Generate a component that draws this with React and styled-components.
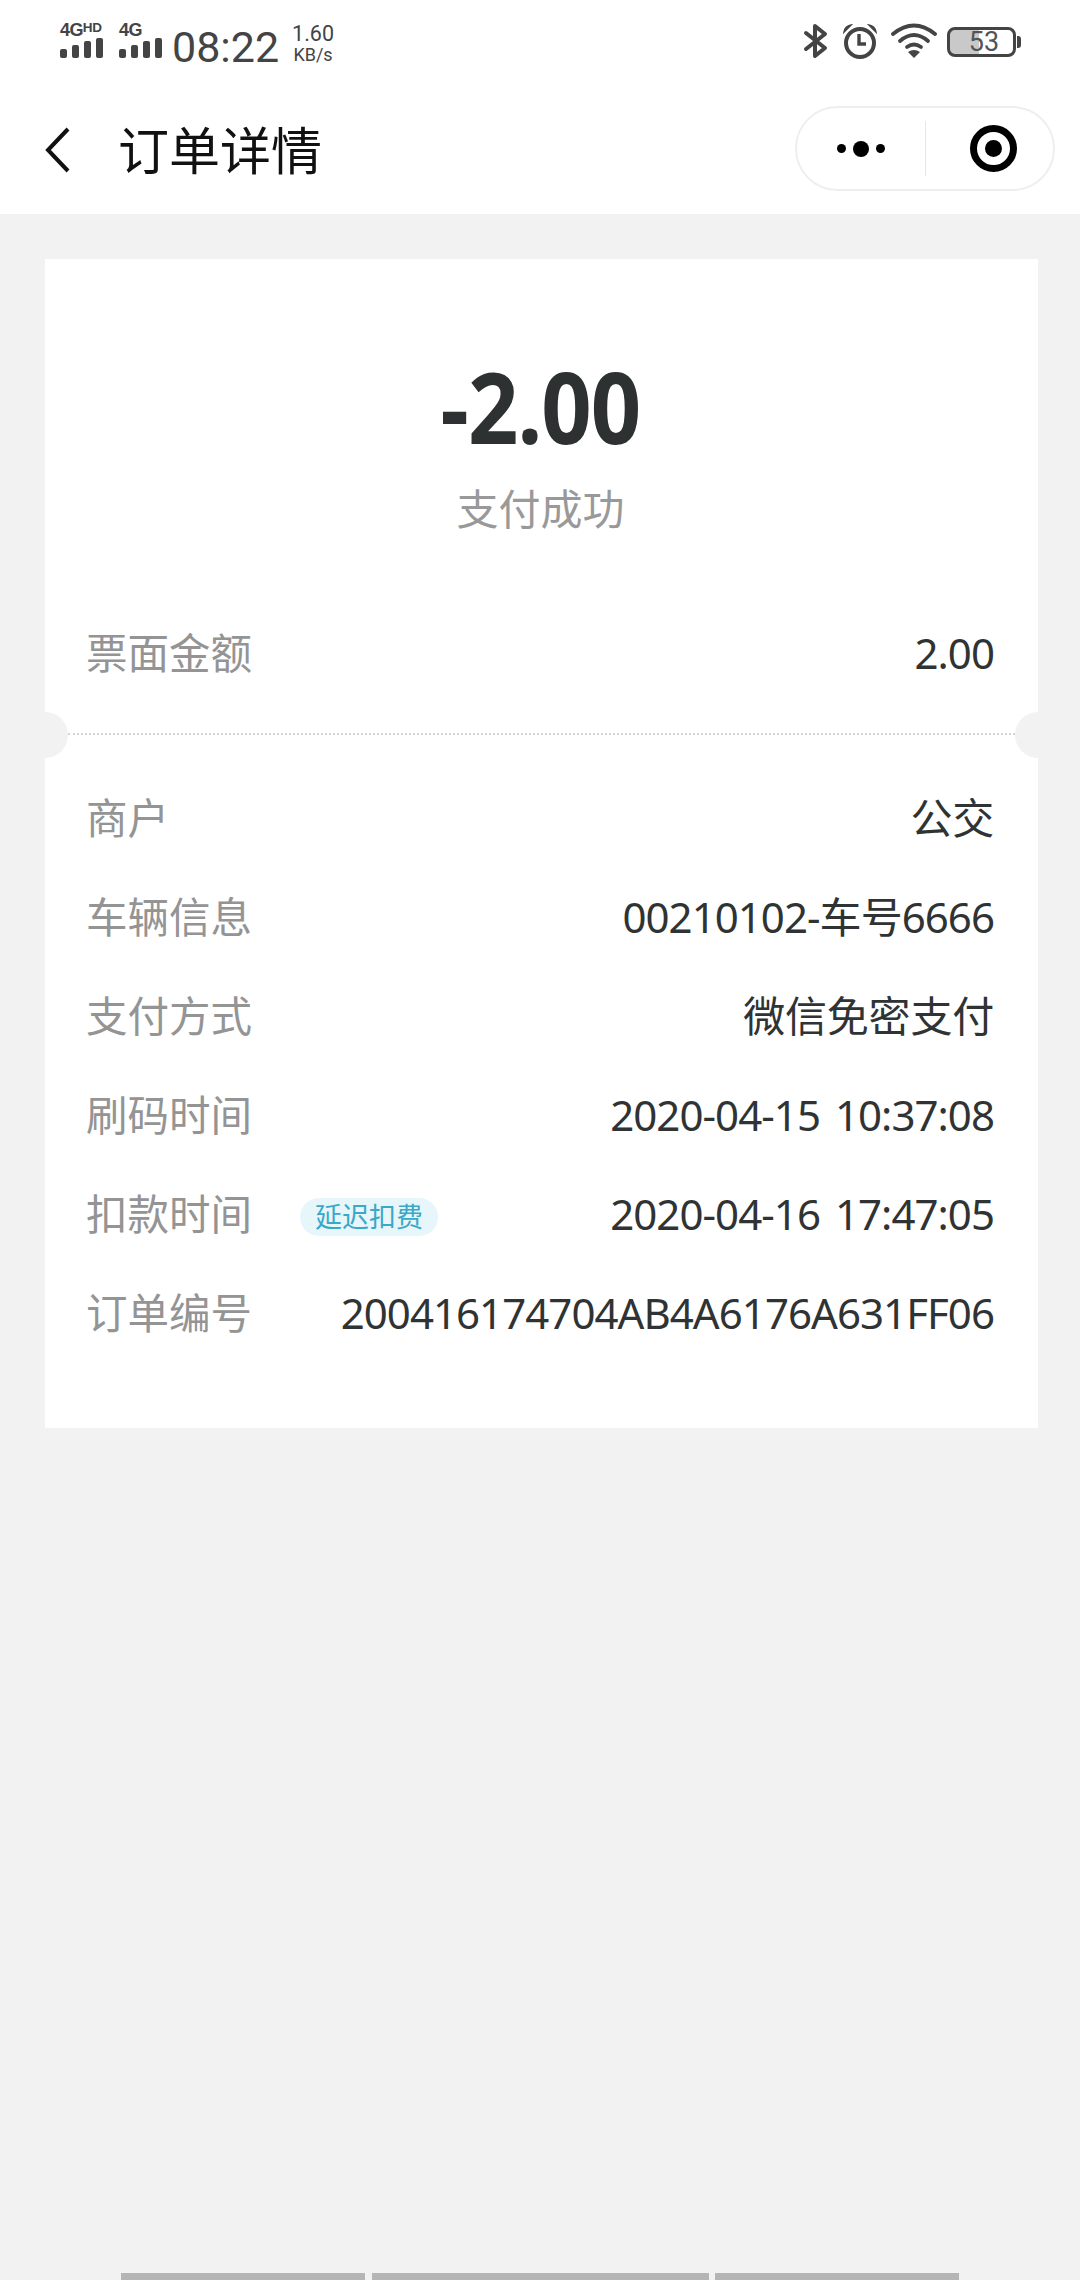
import React from "react";
import styled, { createGlobalStyle } from "styled-components";

const Global = createGlobalStyle`
  html, body { margin: 0; padding: 0; background: #f2f2f2; }
  * { box-sizing: border-box; }
`;
const CJK = `"Noto Sans", "Noto Sans CJK SC", sans-serif`;

const Page = styled.div`
  width: 1080px; height: 2280px; display: flex; flex-direction: column;
  background: #f2f2f2; font-family: ${CJK}; overflow: hidden;
`;
const Header = styled.header`
  height: 214px; background: #fff; display: flex; flex-direction: column; flex: none;
`;
const StatusBar = styled.div`
  height: 100px; padding: 23px 64px 0 60px; display: flex; justify-content: space-between; align-items: flex-start; color: #444;
`;
const StatusGroup = styled.div`
  display: flex; align-items: flex-start; gap: ${p => p.$gap}px;
`;
const Signal = styled.div`
  width: ${p => p.$w}px; display: flex; flex-direction: column; height: 36px; margin-right: ${p => p.$mr || 0}px;
`;
const SignalLabel = styled.div`
  font: 700 18px/14px "Liberation Sans", sans-serif; color: #444; letter-spacing: -0.6px; white-space: nowrap;
  sup { font-size: 13.5px; line-height: 0; vertical-align: 4px; letter-spacing: -0.2px; }
`;
const Bars = styled.div`
  display: flex; align-items: flex-end; justify-content: space-between; height: 20px; margin-top: 1px; width: 43px;
`;
const Bar = styled.span`
  width: 6.5px; height: ${p => p.$h}px; border-radius: 2px; background: #444; display: block;
`;
const Clock = styled.div`
  font: 400 43px/36px Roboto, sans-serif; color: #444; margin-top: 6px; margin-left: 10px;
`;
const Speed = styled.div`
  margin-left: 13px; margin-top: 2px; text-align: center; font-family: Roboto, sans-serif; color: #444;
  b { display: block; font-weight: 400; font-size: 21.5px; line-height: 18px; }
  i { display: block; font-style: normal; font-size: 18px; line-height: 17px; margin-top: 3px; }
`;
const Battery = styled.div`
  position: relative; width: 69px; height: 30px; border: 3px solid #444; border-radius: 8px; margin-top: 4px; margin-left: -3px;
  font: 400 27px/24px Roboto, sans-serif; color: #555; text-align: center; padding-left: 5px;
  background: linear-gradient(90deg, #c9c9c9 0 46%, transparent 46%);
  &::after { content: ""; position: absolute; right: -8px; top: 6px; width: 4px; height: 12px; background: #444; border-radius: 0 3px 3px 0; }
`;
const NavBar = styled.div`
  flex: 1; position: relative; display: flex; align-items: flex-start; padding: 0 25px 0 45px;
`;
const Back = styled.svg`
  width: 26px; height: 46px; margin-top: 27px; flex: none;
`;
const Title = styled.h1`
  margin: 17px 0 0 47px; font: 400 51px/66px ${CJK}; color: #111; flex: 1;
`;
const Capsule = styled.div`
  width: 260px; height: 85px; margin-top: 6px; border: 2px solid #eee; border-radius: 43px; display: flex; align-items: center; flex: none;
`;
const DotsBox = styled.div`
  width: 129px; height: 55px; display: flex; align-items: center; justify-content: flex-end; padding-right: 40px; gap: 7px;
  border-right: 1px solid #e6e6e6;
`;
const Dot = styled.span`
  width: ${p => p.$s}px; height: ${p => p.$s}px; border-radius: 50%; background: #000; display: block;
`;
const Target = styled.div`
  width: 47px; height: 47px; margin-left: 44px; border: 7px solid #000; border-radius: 50%; display: flex; align-items: center; justify-content: center;
  &::after { content: ""; width: 17px; height: 17px; border-radius: 50%; background: #000; }
`;
const Card = styled.section`
  margin: 45px 42px 0 45px; padding: 87px 44px 66px 41px; background: #fff; position: relative;
`;
const Amount = styled.div`
  text-align: center; font: 700 98px/120px "Noto Sans", sans-serif; color: #2e3131; letter-spacing: -1px;
  transform: scaleX(0.9); margin-left: 1px;
`;
const Status = styled.div`
  margin-top: 13px; margin-left: 1px; text-align: center; font: 400 42px/60px ${CJK}; color: #999;
`;
const Row = styled.div`
  height: 99px; display: flex; align-items: center;
  ${p => p.$first ? "margin-top: 64px;" : ""}
`;
const Label = styled.span`
  font: 400 41.5px/60px ${CJK}; color: #949494; flex: none; width: 167px;
`;
const Badge = styled.span`
  margin-left: 47px; width: 138px; height: 38px; border-radius: 19px; background: #e7f6fb; color: #3aa8c7; margin-top: 6px;
  font: 400 27px/38px ${CJK}; text-align: center; flex: none;
`;
const Value = styled.span`
  margin-left: auto; font: 400 42px/60px ${CJK}; color: #303333; white-space: nowrap; word-spacing: 5px;
  letter-spacing: ${p => (p.$cjk ? "-0.2px" : "-0.95px")};
`;
const Perforation = styled.div`
  position: relative; height: 2px; margin: 31px -21px 33px -18px; border-top: 2px dotted #d4d4d4;
  &::before, &::after { content: ""; position: absolute; top: -23px; width: 46px; height: 46px; border-radius: 50%; background: #f2f2f2; }
  &::before { left: -46px; }
  &::after { right: -46px; }
`;
const Gesture = styled.div`
  margin-top: auto; height: 7px; padding-left: 121px; display: flex; gap: 6.5px;
`;
const GestureSeg = styled.span`
  width: ${p => p.$w}px; height: 100%; background: #b5b5b5; display: block;
`;

const rows = [
  { label: "商户", value: "公交", cjk: true },
  { label: "车辆信息", value: "00210102-车号6666" },
  { label: "支付方式", value: "微信免密支付", cjk: true },
  { label: "刷码时间", value: "2020-04-15 10:37:08" },
  { label: "扣款时间", value: "2020-04-16 17:47:05", badge: "延迟扣费" },
  { label: "订单编号", value: "200416174704AB4A6176A631FF06" },
];

const SignalBars = () => (
  <Bars>
    <Bar $h={9} /><Bar $h={13} /><Bar $h={17} /><Bar $h={20} />
  </Bars>
);

export default function App() {
  return (
    <Page>
      <Global />
      <Header>
        <StatusBar>
          <StatusGroup $gap={0}>
            <Signal $w={43} $mr={16}>
              <SignalLabel>4G<sup>HD</sup></SignalLabel>
              <SignalBars />
            </Signal>
            <Signal $w={43}>
              <SignalLabel>4G</SignalLabel>
              <SignalBars />
            </Signal>
            <Clock>08:22</Clock>
            <Speed><b>1.60</b><i>KB/s</i></Speed>
          </StatusGroup>
          <StatusGroup $gap={13}>
            <svg width="26" height="36" viewBox="0 0 26 36" fill="none" stroke="#444" strokeWidth="4" strokeLinejoin="round" strokeLinecap="round">
              <path d="M3 10 L22 25 L12 33 V3 L22 11 L3 26" />
            </svg>
            <svg width="36" height="36" viewBox="0 0 36 36" fill="none" stroke="#444" strokeWidth="4">
              <circle cx="18" cy="20" r="14" />
              <path d="M17 11 V21 H24" strokeWidth="3.4" />
              <path d="M2 9 Q3 3 9 2 Z M34 9 Q33 3 27 2 Z" fill="#444" strokeWidth="1.5" />
            </svg>
            <svg width="46" height="36" viewBox="0 0 46 36" fill="none" stroke="#444" strokeWidth="3.8" strokeLinecap="round">
              <path d="M2 11 Q23 -6 44 11" />
              <path d="M9 18 Q23 6 37 18" />
              <path d="M16 24 Q23 19 30 24" />
              <path d="M17 29 Q23 25 29 29 L23 35 Z" fill="#444" stroke="none" />
            </svg>
            <Battery>53</Battery>
          </StatusGroup>
        </StatusBar>
        <NavBar>
          <Back viewBox="0 0 26 46" fill="none" stroke="#111" strokeWidth="4">
            <path d="M23 2 L3 23 L23 44" />
          </Back>
          <Title>订单详情</Title>
          <Capsule>
            <DotsBox>
              <Dot $s={9} /><Dot $s={16} /><Dot $s={9} />
            </DotsBox>
            <Target />
          </Capsule>
        </NavBar>
      </Header>
      <Card>
        <Amount>-2.00</Amount>
        <Status>支付成功</Status>
        <Row $first>
          <Label>票面金额</Label>
          <Value>2.00</Value>
        </Row>
        <Perforation />
        {rows.map(r => (
          <Row key={r.label}>
            <Label>{r.label}</Label>
            {r.badge && <Badge>{r.badge}</Badge>}
            <Value $cjk={r.cjk}>{r.value}</Value>
          </Row>
        ))}
      </Card>
      <Gesture>
        <GestureSeg $w={244} />
        <GestureSeg $w={337} />
        <GestureSeg $w={244} />
      </Gesture>
    </Page>
  );
}
